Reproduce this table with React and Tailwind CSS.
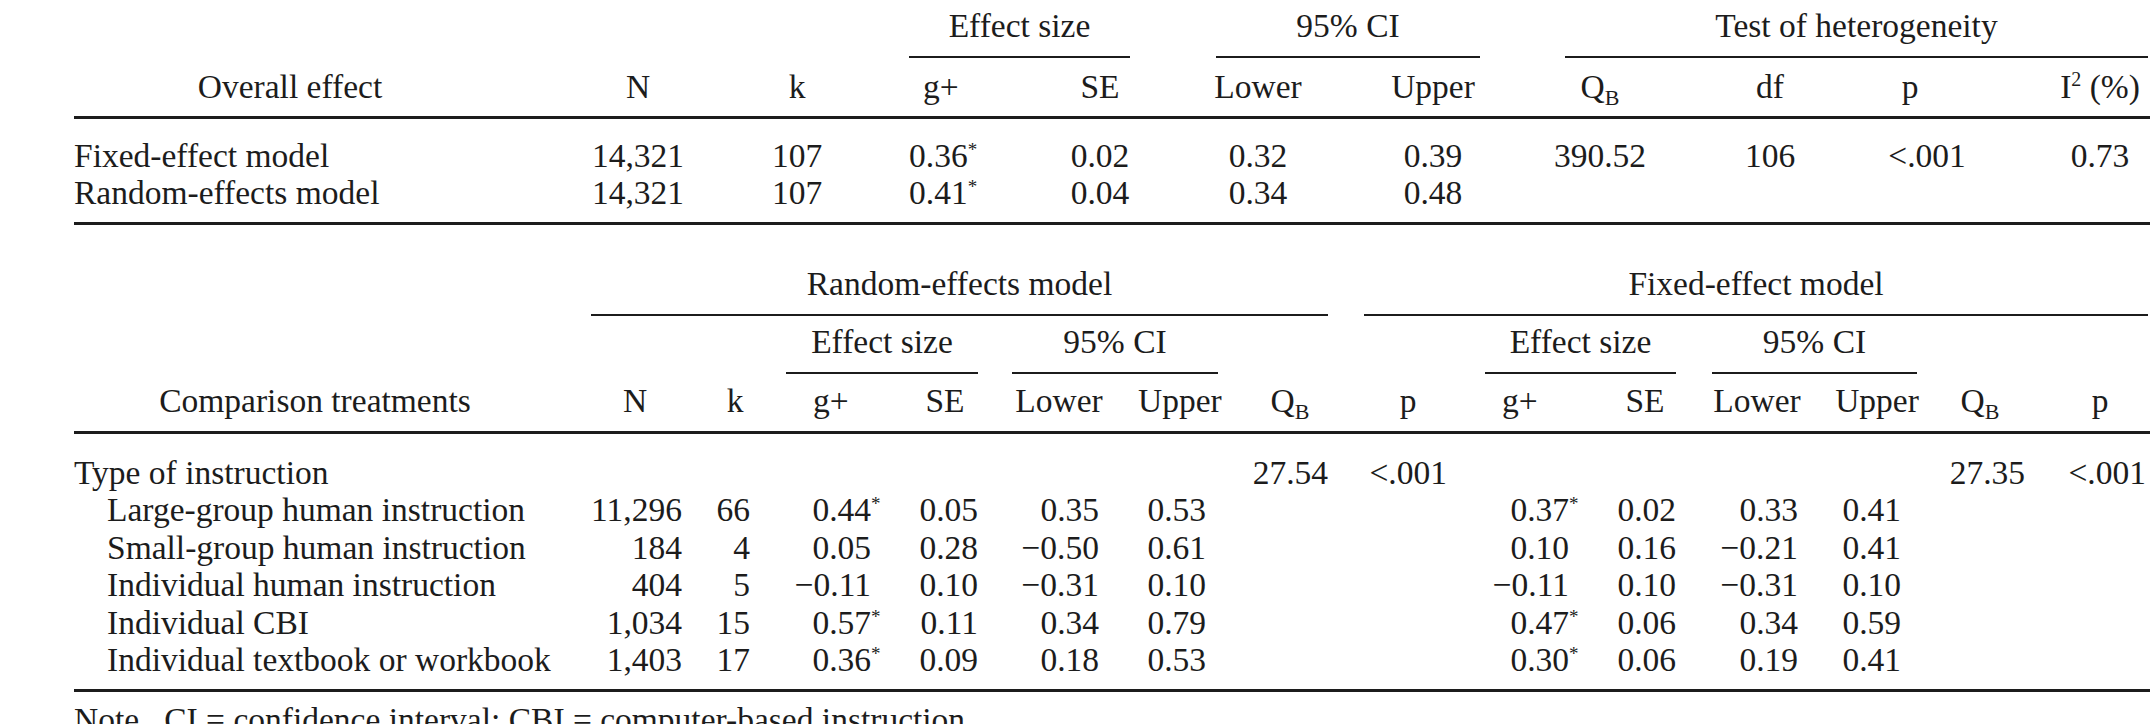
import React from 'react';

const TOP = "grid grid-cols-[466px_196px_122px_182px_120px_196px_154px_180px_160px_136px_164px]";
const BOT = "grid grid-cols-[482px_134px_68px_142px_90px_120px_110px_120px_120px_140px_90px_120px_110px_120px_110px]";

const Star = () => <span className="relative -top-[11px] text-[19px] leading-none">*</span>;

// number with a fixed-width slot for the asterisk so decimals line up
function Num({ v }) {
  const star = v.endsWith('*');
  const n = star ? v.slice(0, -1) : v;
  return (
    <span className="whitespace-nowrap">
      {n}
      <span className="inline-block w-[17px] text-left">{star && <Star />}</span>
    </span>
  );
}

const QB = () => (
  <span className="whitespace-nowrap">
    Q<span className="relative top-[7px] text-[22px] leading-none">B</span>
  </span>
);

function Spanner({ className, label }) {
  return (
    <div className={className}>
      <div className="text-center whitespace-nowrap">{label}</div>
      <div className="mt-[11.5px] h-[2px] bg-[#1c1c1c]" />
    </div>
  );
}

const rows = [
  ['Large-group human instruction', '11,296', '66', '0.44*', '0.05', '0.35', '0.53', '0.37*', '0.02', '0.33', '0.41'],
  ['Small-group human instruction', '184', '4', '0.05', '0.28', '−0.50', '0.61', '0.10', '0.16', '−0.21', '0.41'],
  ['Individual human instruction', '404', '5', '−0.11', '0.10', '−0.31', '0.10', '−0.11', '0.10', '−0.31', '0.10'],
  ['Individual CBI', '1,034', '15', '0.57*', '0.11', '0.34', '0.79', '0.47*', '0.06', '0.34', '0.59'],
  ['Individual textbook or workbook', '1,403', '17', '0.36*', '0.09', '0.18', '0.53', '0.30*', '0.06', '0.19', '0.41'],
];

export default function App() {
  return (
    <div className="min-h-[724px] bg-white font-['Liberation_Serif',serif] text-[33.5px] leading-[37.5px] text-[#1c1c1c]">
      <div className="ml-[74px] w-[2076px] pt-[7px]">
        {/* overall effect */}
        <div className={TOP}>
          <Spanner className="col-start-4 col-span-2 ml-[51px] mr-[30px]" label="Effect size" />
          <Spanner className="col-span-2 ml-[56px] mr-[30px]" label="95% CI" />
          <Spanner className="col-span-4 ml-[55px] mr-[2px]" label="Test of heterogeneity" />
        </div>
        <div className={`${TOP} mt-[9.5px] text-center`}>
          <div className="pr-[34px]">Overall effect</div>
          <div>N</div>
          <div>k</div>
          <div className="text-left pl-[65px]">g+</div>
          <div>SE</div>
          <div>Lower</div>
          <div>Upper</div>
          <div><QB /></div>
          <div>df</div>
          <div className="pr-[16px]">p</div>
          <div className="pl-[64px] whitespace-nowrap">
            I<span className="relative -top-[12px] text-[20px] leading-none">2</span> (%)
          </div>
        </div>
        <div className="mt-[11px] h-[3px] bg-[#1c1c1c]" />
        <div className="mt-[17.5px] leading-[37px]">
          <div className={`${TOP} text-center`}>
            <div className="text-left">Fixed-effect model</div>
            <div>14,321</div>
            <div>107</div>
            <div className="text-left pl-[51px]">0.36<Star /></div>
            <div>0.02</div>
            <div>0.32</div>
            <div>0.39</div>
            <div>390.52</div>
            <div>106</div>
            <div className="pl-[18px]">&lt;.001</div>
            <div className="pl-[64px]">0.73</div>
          </div>
          <div className={`${TOP} text-center`}>
            <div className="text-left">Random-effects model</div>
            <div>14,321</div>
            <div>107</div>
            <div className="text-left pl-[51px]">0.41<Star /></div>
            <div>0.04</div>
            <div>0.34</div>
            <div>0.48</div>
            <div />
            <div />
            <div />
            <div />
          </div>
        </div>
        <div className="mt-[11px] h-[3px] bg-[#1c1c1c]" />

        {/* comparison treatments */}
        <div className={`${BOT} mt-[40.5px]`}>
          <Spanner className="col-start-2 col-span-7 ml-[35px] mr-[12px]" label="Random-effects model" />
          <Spanner className="col-span-7 ml-[24px] mr-[2px]" label="Fixed-effect model" />
        </div>
        <div className={`${BOT} mt-[7px]`}>
          <Spanner className="col-start-4 col-span-2 ml-[28px] mr-[12px]" label="Effect size" />
          <Spanner className="col-span-2 ml-[22px] mr-[2px]" label="95% CI" />
          <Spanner className="col-start-10 col-span-2 ml-[25px] mr-[14px]" label="Effect size" />
          <Spanner className="col-span-2 ml-[22px] mr-[3px]" label="95% CI" />
        </div>
        <div className={`${BOT} mt-[8px] text-center`}>
          <div className="whitespace-nowrap">Comparison treatments</div>
          <div className="pl-[24px]">N</div>
          <div className="pl-[22px]">k</div>
          <div className="text-left pl-[55px]">g+</div>
          <div>SE</div>
          <div className="pl-[18px]">Lower</div>
          <div className="pl-[28px]">Upper</div>
          <div className="pl-[20px]"><QB /></div>
          <div className="pl-[16px]">p</div>
          <div className="text-left pl-[42px]">g+</div>
          <div>SE</div>
          <div className="pl-[14px]">Lower</div>
          <div className="pl-[24px]">Upper</div>
          <div><QB /></div>
          <div className="pl-[10px]">p</div>
        </div>
        <div className="mt-[11.5px] h-[3px] bg-[#1c1c1c]" />

        <div className="mt-[20px] leading-[37.4px]">
          <div className={`${BOT} text-right`}>
            <div className="text-left whitespace-nowrap">Type of instruction</div>
            <div className="col-start-8 pr-[12px]">27.54</div>
            <div className="pr-[13px]">&lt;.001</div>
            <div className="col-start-14 pr-[15px]">27.35</div>
            <div className="pr-[4px]">&lt;.001</div>
          </div>
          {rows.map((r) => (
            <div key={r[0]} className={`${BOT} text-right`}>
              <div className="text-left pl-[33px] whitespace-nowrap">{r[0]}</div>
              <div className="pr-[8px]">{r[1]}</div>
              <div className="pr-[8px]">{r[2]}</div>
              <div className="pr-[12px]"><Num v={r[3]} /></div>
              <div className="pr-[12px]">{r[4]}</div>
              <div className="pr-[11px]">{r[5]}</div>
              <div className="pr-[14px]">{r[6]}</div>
              <div />
              <div />
              <div className="pr-[14px]"><Num v={r[7]} /></div>
              <div className="pr-[14px]">{r[8]}</div>
              <div className="pr-[12px]">{r[9]}</div>
              <div className="pr-[19px]">{r[10]}</div>
              <div />
              <div />
            </div>
          ))}
        </div>
        <div className="mt-[10.6px] h-[3px] bg-[#1c1c1c]" />
        <div className="mt-[9px] whitespace-nowrap">
          Note.&nbsp; CI = confidence interval; CBI = computer-based instruction.
        </div>
      </div>
    </div>
  );
}
